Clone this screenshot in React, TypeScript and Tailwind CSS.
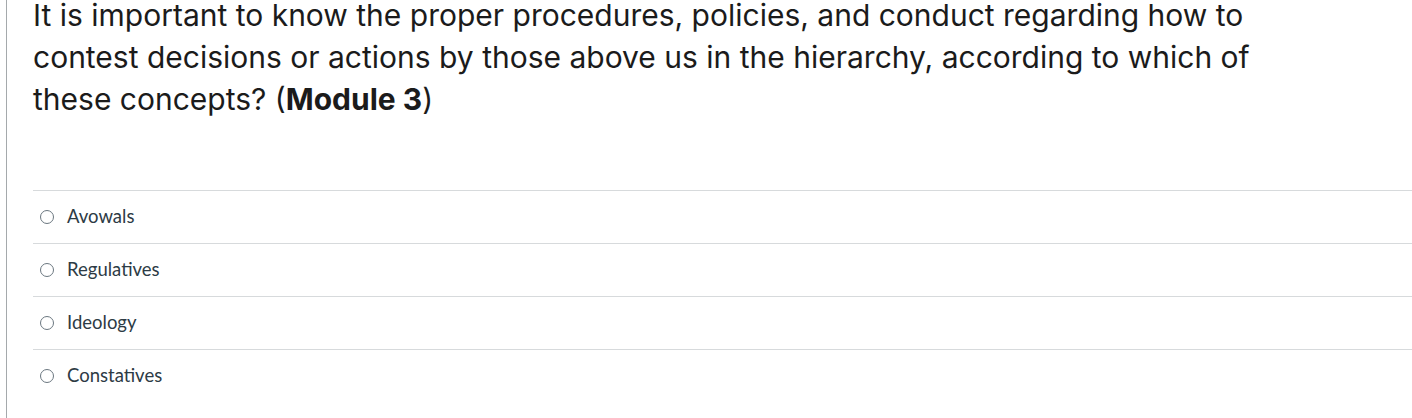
const options = ['Avowals', 'Regulatives', 'Ideology', 'Constatives']

export default function App() {
  return (
    <div className="min-h-[418px] bg-white pl-[6px]">
      <div className="min-h-[418px] border-l border-[#a5a9ac] pl-[26px]">
        <p
          className="flex flex-col gap-[12px] text-[30px] leading-[30px] text-[#1b1b1b]"
          style={{ fontFamily: 'Inter, sans-serif' }}
        >
          <span>It is important to know the proper procedures, policies, and conduct regarding how to</span>
          <span>contest decisions or actions by those above us in the hierarchy, according to which of</span>
          <span>
            these concepts? (<strong className="font-bold">Module 3</strong>)
          </span>
        </p>
        <div className="mt-[76px]">
          {options.map((o) => (
            <label
              key={o}
              className="flex h-[53px] items-center border-t border-[#d7dadc] text-[18.5px] text-[#2d3b45]"
              style={{ fontFamily: 'Lato, sans-serif' }}
            >
              <span className="ml-[7px] mr-[13px] h-[14px] w-[14px] shrink-0 rounded-full border border-[#6b7780]" />
              {o}
            </label>
          ))}
        </div>
      </div>
    </div>
  )
}
